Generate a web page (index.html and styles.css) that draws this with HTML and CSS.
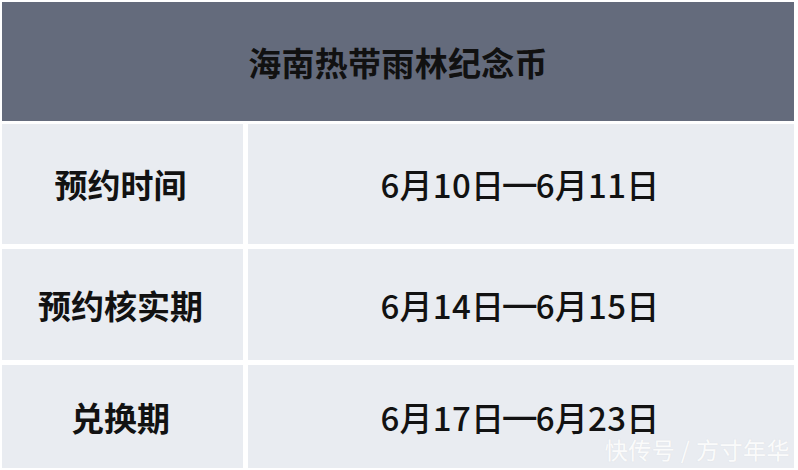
FILE: index.html
```html
<!DOCTYPE html>
<html lang="zh-CN">
<head>
<meta charset="utf-8">
<title>海南热带雨林纪念币</title>
<link rel="stylesheet" href="styles.css">
</head>
<body>
<div class="page">
  <div class="title">海南热带雨林纪念币</div>
  <div class="grid">
    <div class="cell label">预约时间</div>
    <div class="cell date">6月10日<span class="dash">—</span>6月11日</div>
    <div class="cell label">预约核实期</div>
    <div class="cell date">6月14日<span class="dash">—</span>6月15日</div>
    <div class="cell label">兑换期</div>
    <div class="cell date">6月17日<span class="dash">—</span>6月23日</div>
  </div>
  <div class="watermark">快传号 / 方寸年华</div>
</div>
</body>
</html>
```
FILE: styles.css
```css
html, body {
  margin: 0;
  padding: 0;
  background: #ffffff;
}
body {
  width: 798px;
  height: 470px;
  overflow: hidden;
  font-family: "Noto Sans CJK SC", "Noto Sans", sans-serif;
  color: #121212;
}
.page {
  position: relative;
  padding: 2px 4px 2px 2px;
  height: 466px;
}
.title {
  height: 119px;
  background: #646b7c;
  display: flex;
  align-items: center;
  justify-content: center;
  font-size: 33px;
  font-weight: 700;
  margin-bottom: 3px;
  color: #111;
  letter-spacing: 0.3px;
}
.grid {
  display: grid;
  grid-template-columns: 241px 1fr;
  grid-template-rows: 120px 111px 103px;
  column-gap: 5px;
  row-gap: 5px;
}
.cell {
  background: #e9ecf1;
  display: flex;
  align-items: center;
  justify-content: center;
  font-size: 32px;
}
.label {
  font-size: 33px;
  font-weight: 700;
  padding-right: 4px;
}
.date {
  font-size: 33px;
  font-weight: 500;
  padding-right: 2px;
  letter-spacing: 0.3px;
}
.dash {
  font-family: "Liberation Sans", sans-serif;
  font-weight: 700;
  margin: 0 -1px;
  position: relative;
  top: -1px;
}
.watermark {
  position: absolute;
  right: 8px;
  bottom: 4px;
  font-size: 23px;
  font-weight: 400;
  color: rgba(255, 255, 255, 0.9);
  letter-spacing: 0.5px;
  text-shadow: 0 0 1px rgba(200, 200, 200, 0.4);
}
```
